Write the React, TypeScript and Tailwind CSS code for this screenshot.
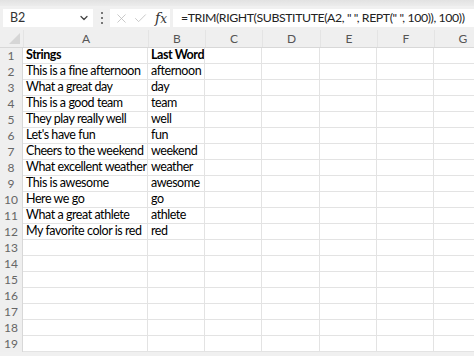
import { X, Check, ChevronDown } from 'lucide-react';

const COLS = [
  { key: 'A', w: 'w-[125px]' },
  { key: 'B', w: 'w-[57px]' },
  { key: 'C', w: 'w-[57px]' },
  { key: 'D', w: 'w-[58px]' },
  { key: 'E', w: 'w-[57px]' },
  { key: 'F', w: 'w-[57px]' },
  { key: 'G', w: 'w-[57px]' },
];

const DATA: [string, string][] = [
  ['Strings', 'Last Word'],
  ['This is a fine afternoon', 'afternoon'],
  ['What a great day', 'day'],
  ['This is a good team', 'team'],
  ['They play really well', 'well'],
  ["Let's have fun", 'fun'],
  ['Cheers to the weekend', 'weekend'],
  ['What excellent weather', 'weather'],
  ['This is awesome', 'awesome'],
  ['Here we go', 'go'],
  ['What a great athlete', 'athlete'],
  ['My favorite color is red', 'red'],
];

const ROWS = 19;

const App = () => {
  return (
    <div className="w-[474px] h-[356px] overflow-hidden bg-[#f0f0f0] font-['Lato',sans-serif]">
      <div className="h-[6px] bg-gradient-to-b from-[#e2e2e2] to-[#ececec]" />

      {/* formula bar */}
      <div className="flex items-center h-[24px] pl-[3px]">
        <div className="shrink-0 flex items-center justify-between w-[90px] h-[18px] bg-white pl-[7px] pr-[3px] text-[12.5px] text-[#333]">
          <span>B2</span>
          <ChevronDown size={12} strokeWidth={2.5} className="text-[#444]" />
        </div>
        <div className="shrink-0 w-[17px] flex flex-col items-center gap-[3px]">
          <span className="block w-[2px] h-[2px] bg-[#777]" />
          <span className="block w-[2px] h-[2px] bg-[#777]" />
          <span className="block w-[2px] h-[2px] bg-[#777]" />
        </div>
        <div className="shrink-0 flex items-center w-[60px] h-[18px] bg-white pl-[4px] gap-[4px] text-[#bdbdbd]">
          <X size={15} strokeWidth={1.3} />
          <Check size={15} strokeWidth={1.3} />
          <span className="ml-[3px] font-['DejaVu_Serif',serif] italic text-[14px] text-[#333] leading-none">
            f<span className="text-[12px]">x</span>
          </span>
        </div>
        <div className="ml-[3px] flex-1 min-w-0 flex items-center h-[18px] bg-white pl-[8px] text-[12.3px] tracking-[-0.4px] text-[#222] whitespace-nowrap overflow-hidden">
          =TRIM(RIGHT(SUBSTITUTE(A2, " ", REPT(" ", 100)), 100))
        </div>
      </div>

      {/* column headers */}
      <div className="flex h-[18px] bg-[#efefef] border-b border-[#d8d8d8]">
        <div className="w-[23px] shrink-0 relative">
          <div className="absolute right-[3px] bottom-[3px] w-0 h-0 border-l-[11px] border-l-transparent border-b-[11px] border-b-[#d6d6d6]" />
        </div>
        {COLS.map((c) => (
          <div
            key={c.key}
            className={`${c.w} shrink-0 flex items-center justify-center border-l border-[#e4e4e4] text-[12px] text-[#555]`}
          >
            {c.key}
          </div>
        ))}
      </div>

      {/* rows */}
      <div className="flex flex-col">
        {Array.from({ length: ROWS }, (_, i) => {
          const row = DATA[i];
          return (
            <div key={i} className="flex h-[16px]">
              <div className="w-[23px] shrink-0 bg-[#efefef] border-r border-[#d8d8d8] flex items-center justify-center text-[12px] text-[#666] leading-none">
                {i + 1}
              </div>
              {COLS.map((c, ci) => (
                <div
                  key={c.key}
                  className={`${c.w} shrink-0 bg-white border-r border-b border-[#e3e3e3] flex items-center pl-[3px] text-[12.5px] tracking-[-0.45px] text-black leading-none whitespace-nowrap overflow-hidden ${
                    i === 0 ? 'font-bold' : ''
                  }`}
                >
                  {row && ci < 2 ? row[ci] : ''}
                </div>
              ))}
            </div>
          );
        })}
      </div>
    </div>
  );
};

export default App;
